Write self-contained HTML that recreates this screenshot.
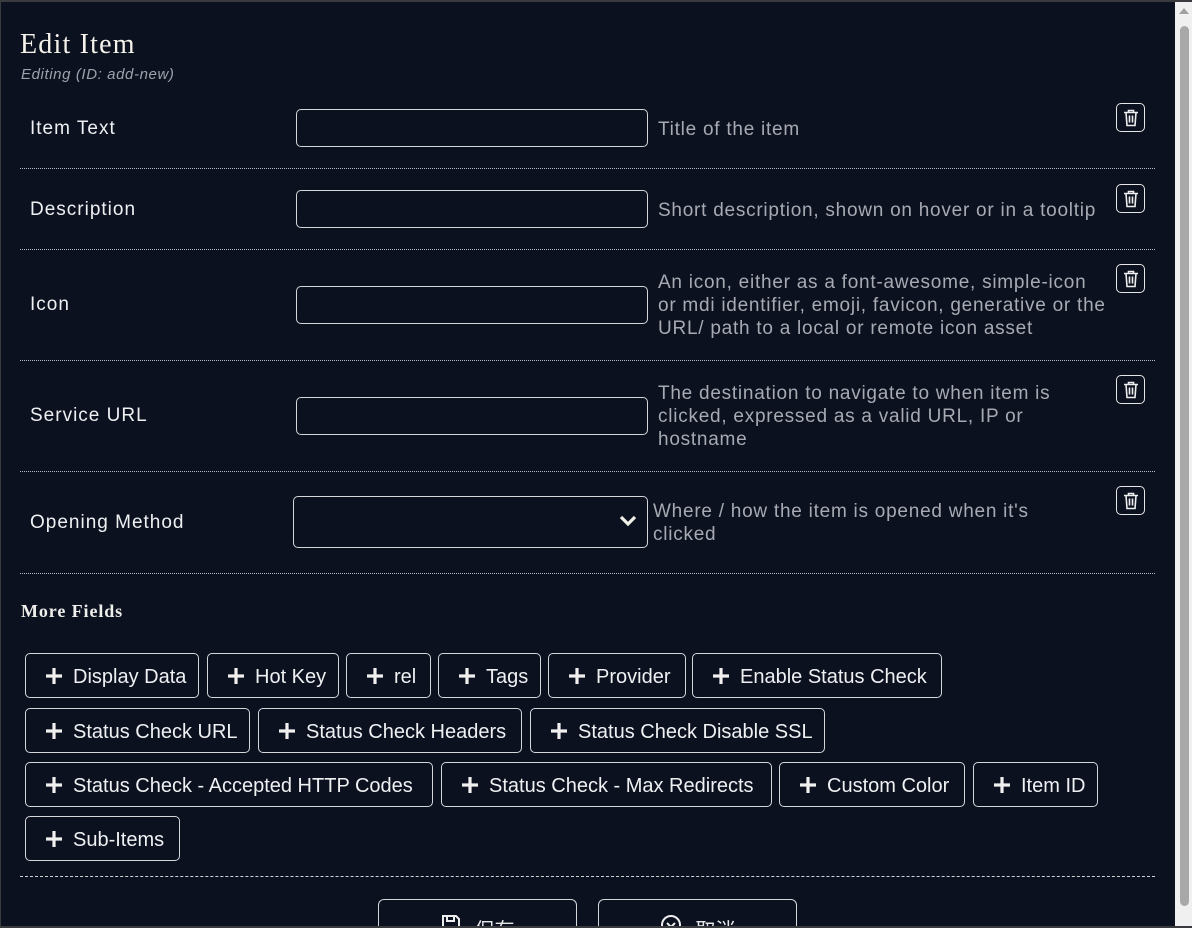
<!DOCTYPE html>
<html><head><meta charset="utf-8"><style>
*{box-sizing:border-box;margin:0;padding:0}
html,body{width:1192px;height:928px;overflow:hidden;background:#3a3b3f;font-family:"Liberation Sans","Noto Sans CJK SC",sans-serif;color:#e8e8ea}
#win{position:absolute;left:1px;top:2px;width:1174px;height:924px;background:#0c1120;overflow:hidden}
#sb{position:absolute;left:1175px;top:2px;width:17px;height:924px;background:#f0f0f0}
#thumb{position:absolute;left:1180px;top:26px;width:9px;height:880px;background:#a8a8a8;border-radius:5px}
.a{position:absolute}
h1{position:absolute;left:19px;top:27px;font-family:"Liberation Serif",serif;font-size:28px;font-weight:normal;color:#f4f2ea;letter-spacing:1.2px}
.sub{left:20px;top:64px;font-size:15px;font-style:italic;color:#9ea2ab;letter-spacing:.6px}
.lab{left:29px;font-size:19px;color:#eef0f2;letter-spacing:1px}
.inp{left:295px;width:352px;height:38px;border:1.5px solid #d4d6da;border-radius:5px}
.help{left:657px;font-size:19px;line-height:23px;color:#a7aab2;letter-spacing:.75px;white-space:nowrap}
.sep{left:19px;width:1135px;border-top:1.5px dotted #b8bac0;height:0}
.tr{left:1115px;width:29px;height:29px;border:1.5px solid #e6e6e6;border-radius:5px;display:flex;align-items:center;justify-content:center}
.mf{left:20px;top:599px;font-family:"Liberation Serif",serif;font-weight:bold;font-size:18px;color:#eeeeea;letter-spacing:.9px}
.b{position:absolute;height:45px;border:1.5px solid #d4d6da;border-radius:5px;display:flex;align-items:center;justify-content:flex-start;padding-left:19px;padding-top:3px;font-size:20px;color:#eef0f2;gap:10px;white-space:nowrap}
.b svg{flex:none;margin-top:-2px}
.bb{position:absolute;top:897px;width:199px;height:50px;border:1.5px solid #d4d6da;border-radius:6px;display:flex;justify-content:center;padding-top:14px;gap:14px;font-size:20px}
</style></head><body>
<div id="win">
<h1>Edit Item</h1>
<div class="a sub">Editing (ID: add-new)</div>

<div class="a lab" style="top:116px">Item Text</div>
<div class="a inp" style="top:107px"></div>
<div class="a help" style="top:116px">Title of the item</div>
<div class="a tr" style="top:101px"><svg width="16" height="18" viewBox="0 0 16 18" fill="none" stroke="#eee" stroke-width="1.6"><path d="M1 3.5h14M5.5 3.5V1.5h5v2M3 3.5l1 13h8l1-13M6.5 6.5v7M9.5 6.5v7"/></svg></div>
<div class="a sep" style="top:166px"></div>

<div class="a lab" style="top:197px">Description</div>
<div class="a inp" style="top:188px"></div>
<div class="a help" style="top:197px">Short description, shown on hover or in a tooltip</div>
<div class="a tr" style="top:182px"><svg width="16" height="18" viewBox="0 0 16 18" fill="none" stroke="#eee" stroke-width="1.6"><path d="M1 3.5h14M5.5 3.5V1.5h5v2M3 3.5l1 13h8l1-13M6.5 6.5v7M9.5 6.5v7"/></svg></div>
<div class="a sep" style="top:247px"></div>

<div class="a lab" style="top:292px">Icon</div>
<div class="a inp" style="top:284px"></div>
<div class="a help" style="top:269px">An icon, either as a font-awesome, simple-icon<br>or mdi identifier, emoji, favicon, generative or the<br>URL/ path to a local or remote icon asset</div>
<div class="a tr" style="top:262px"><svg width="16" height="18" viewBox="0 0 16 18" fill="none" stroke="#eee" stroke-width="1.6"><path d="M1 3.5h14M5.5 3.5V1.5h5v2M3 3.5l1 13h8l1-13M6.5 6.5v7M9.5 6.5v7"/></svg></div>
<div class="a sep" style="top:358px"></div>

<div class="a lab" style="top:403px">Service URL</div>
<div class="a inp" style="top:395px"></div>
<div class="a help" style="top:380px">The destination to navigate to when item is<br>clicked, expressed as a valid URL, IP or<br>hostname</div>
<div class="a tr" style="top:373px"><svg width="16" height="18" viewBox="0 0 16 18" fill="none" stroke="#eee" stroke-width="1.6"><path d="M1 3.5h14M5.5 3.5V1.5h5v2M3 3.5l1 13h8l1-13M6.5 6.5v7M9.5 6.5v7"/></svg></div>
<div class="a sep" style="top:469px"></div>

<div class="a lab" style="top:510px">Opening Method</div>
<div class="a inp" style="top:494px;left:292px;width:355px;height:52px"><svg style="position:absolute;right:10px;top:18px" width="18" height="12" viewBox="0 0 18 12"><path d="M2 2l7 7 7-7" fill="none" stroke="#f0f0e8" stroke-width="3.2"/></svg></div>
<div class="a help" style="top:498px;left:652px">Where / how the item is opened when it's<br>clicked</div>
<div class="a tr" style="top:484px"><svg width="16" height="18" viewBox="0 0 16 18" fill="none" stroke="#eee" stroke-width="1.6"><path d="M1 3.5h14M5.5 3.5V1.5h5v2M3 3.5l1 13h8l1-13M6.5 6.5v7M9.5 6.5v7"/></svg></div>
<div class="a sep" style="top:571px"></div>

<div class="a mf">More Fields</div>

<div class="b" style="left:24px;top:651px;width:174px"><svg width="18" height="18" viewBox="0 0 18 18"><path d="M9 1v16M1 9h16" stroke="#f0f0ee" stroke-width="3.2"/></svg>Display Data</div>
<div class="b" style="left:206px;top:651px;width:132px"><svg width="18" height="18" viewBox="0 0 18 18"><path d="M9 1v16M1 9h16" stroke="#f0f0ee" stroke-width="3.2"/></svg>Hot Key</div>
<div class="b" style="left:345px;top:651px;width:85px"><svg width="18" height="18" viewBox="0 0 18 18"><path d="M9 1v16M1 9h16" stroke="#f0f0ee" stroke-width="3.2"/></svg>rel</div>
<div class="b" style="left:437px;top:651px;width:103px"><svg width="18" height="18" viewBox="0 0 18 18"><path d="M9 1v16M1 9h16" stroke="#f0f0ee" stroke-width="3.2"/></svg>Tags</div>
<div class="b" style="left:547px;top:651px;width:138px"><svg width="18" height="18" viewBox="0 0 18 18"><path d="M9 1v16M1 9h16" stroke="#f0f0ee" stroke-width="3.2"/></svg>Provider</div>
<div class="b" style="left:691px;top:651px;width:250px"><svg width="18" height="18" viewBox="0 0 18 18"><path d="M9 1v16M1 9h16" stroke="#f0f0ee" stroke-width="3.2"/></svg>Enable Status Check</div>

<div class="b" style="left:24px;top:706px;width:225px"><svg width="18" height="18" viewBox="0 0 18 18"><path d="M9 1v16M1 9h16" stroke="#f0f0ee" stroke-width="3.2"/></svg>Status Check URL</div>
<div class="b" style="left:257px;top:706px;width:264px"><svg width="18" height="18" viewBox="0 0 18 18"><path d="M9 1v16M1 9h16" stroke="#f0f0ee" stroke-width="3.2"/></svg>Status Check Headers</div>
<div class="b" style="left:529px;top:706px;width:295px"><svg width="18" height="18" viewBox="0 0 18 18"><path d="M9 1v16M1 9h16" stroke="#f0f0ee" stroke-width="3.2"/></svg>Status Check Disable SSL</div>

<div class="b" style="left:24px;top:760px;width:408px"><svg width="18" height="18" viewBox="0 0 18 18"><path d="M9 1v16M1 9h16" stroke="#f0f0ee" stroke-width="3.2"/></svg>Status Check - Accepted HTTP Codes</div>
<div class="b" style="left:440px;top:760px;width:331px"><svg width="18" height="18" viewBox="0 0 18 18"><path d="M9 1v16M1 9h16" stroke="#f0f0ee" stroke-width="3.2"/></svg>Status Check - Max Redirects</div>
<div class="b" style="left:778px;top:760px;width:186px"><svg width="18" height="18" viewBox="0 0 18 18"><path d="M9 1v16M1 9h16" stroke="#f0f0ee" stroke-width="3.2"/></svg>Custom Color</div>
<div class="b" style="left:972px;top:760px;width:125px"><svg width="18" height="18" viewBox="0 0 18 18"><path d="M9 1v16M1 9h16" stroke="#f0f0ee" stroke-width="3.2"/></svg>Item ID</div>

<div class="b" style="left:24px;top:814px;width:155px"><svg width="18" height="18" viewBox="0 0 18 18"><path d="M9 1v16M1 9h16" stroke="#f0f0ee" stroke-width="3.2"/></svg>Sub-Items</div>

<div class="a" style="left:19px;top:874px;width:1135px;border-top:1.5px dashed #d0d2d6"></div>

<div class="bb" style="left:377px"><svg width="20" height="20" viewBox="0 0 20 20" fill="none" stroke="#eee" stroke-width="2"><path d="M2 2h13l3 3v13H2zM6 2v5h7V2"/></svg><span>保存</span></div>
<div class="bb" style="left:597px"><svg width="22" height="22" viewBox="0 0 22 22" fill="none" stroke="#eee" stroke-width="2"><circle cx="11" cy="11" r="9"/><path d="M7 9l4 4 4-4"/></svg><span>取消</span></div>
</div>
<div id="sb"><div class="a" style="left:4px;top:6px;width:0;height:0;border-left:5px solid transparent;border-right:5px solid transparent;border-bottom:6px solid #a0a0a0"></div></div>
<div id="thumb"></div>
</body></html>
